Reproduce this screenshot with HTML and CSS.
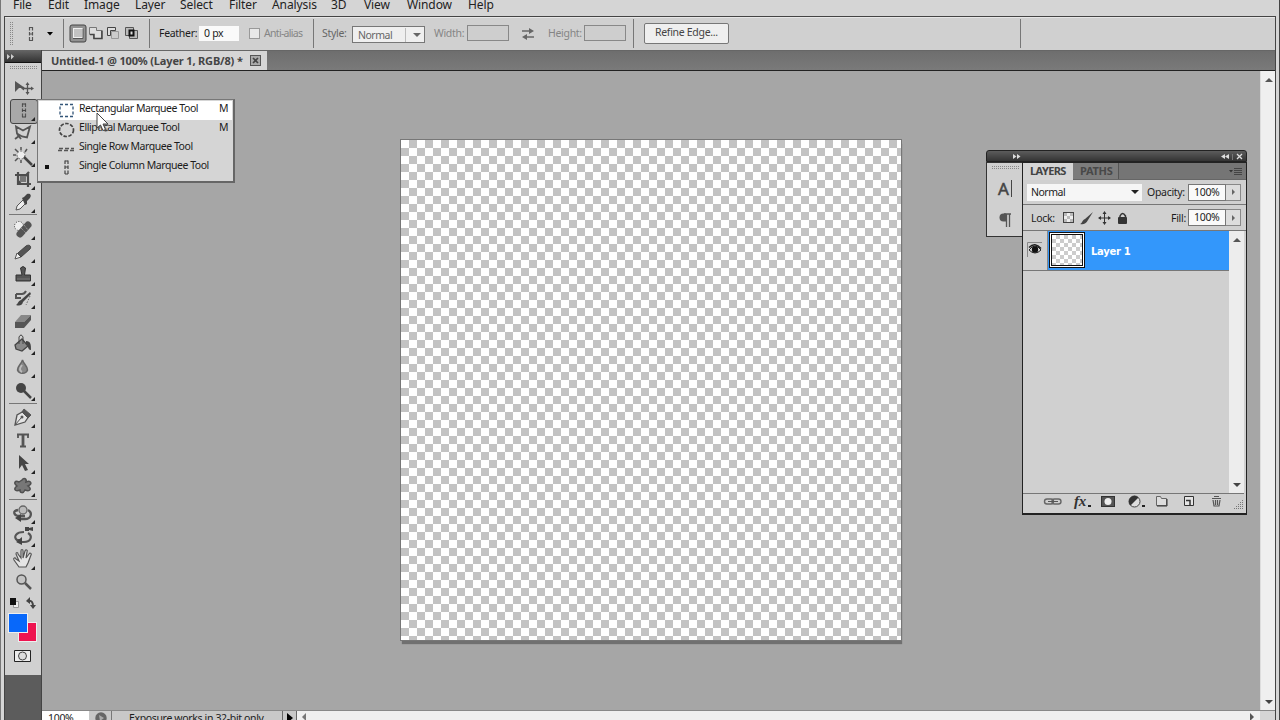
FILE: index.html
```html
<!DOCTYPE html>
<html lang="en">
<head>
<meta charset="utf-8">
<title>Untitled-1</title>
<link rel="stylesheet" href="styles.css">
</head>
<body>
<div class="app">
  <nav class="menubar">
    <span class="m-file">File</span><span class="m-edit">Edit</span><span class="m-image">Image</span><span class="m-layer">Layer</span><span class="m-select">Select</span><span class="m-filter">Filter</span><span class="m-analysis">Analysis</span><span class="m-3d">3D</span><span class="m-view">View</span><span class="m-window">Window</span><span class="m-help">Help</span>
  </nav>
  <div class="frame">
    <div class="options">
      <div class="opt-preset">
        <i class="grip-v"></i>
        <svg width="50" height="30" viewBox="0 0 50 30"><path d="M19.500 8v14M22.500 8v14" stroke="#555" stroke-width="1.200" stroke-dasharray="3.500 1.500"/><path d="M19 8.500h4M19 21.500h4M19 15h4" stroke="#555"/><path d="M37 13h6l-3 3.500z" fill="#000"/></svg>
      </div>
      <div class="opt-modes">
        <svg width="74" height="20" viewBox="0 0 74 20">
          <rect x="1" y="1" width="16" height="17" rx="2" fill="#929292" stroke="#444"/><rect x="4.500" y="4.500" width="9" height="9" fill="#c2c2c2" stroke="#eee"/><path d="M4 14.500h10v-10" fill="none" stroke="#555"/>
          <path d="M20.500 3.500h7v3h5v8h-8v-4h-4z" fill="#ddd" stroke="#777"/><path d="M21 10.500h4v4h8v-8" fill="none" stroke="#444" stroke-width="1.500"/>
          <path d="M38.500 3.500h8v3h-5v5h-3z" fill="#ddd" stroke="#444"/><path d="M42.500 7.500h7v7h-7z" fill="#ccc" stroke="#999"/>
          <path d="M56.500 3.500h8v8h-8zM60.500 6.500h8v8h-8z" fill="#bbb" stroke="#555"/><path d="M60.500 6.500h4v5h-4z" fill="#ddd" stroke="#111" stroke-width="2"/>
        </svg>
      </div>
      <div class="opt-feather"><span class="lbl feather">Feather:</span><span class="field">0 px</span><i class="check"></i><span class="lbl dim anti">Anti-alias</span></div>
      <div class="opt-style"><span class="lbl dim2 style">Style:</span><span class="select"><span class="selval">Normal</span><i class="tri"></i></span><span class="lbl dim width">Width:</span><i class="disabled"></i>
        <svg class="swap" width="14" height="14" viewBox="0 0 14 14"><path d="M1 4h9M4 10h9" stroke="#666" stroke-width="1.500"/><path d="M8 1l5 3-5 3zM6 7l-5 3 5 3z" fill="#666"/></svg>
        <span class="lbl dim height">Height:</span><i class="disabled"></i></div>
      <div class="opt-refine"><span class="button">Refine Edge...</span></div>
    </div>
    <div class="workspace">
      <aside class="tools">
        <div class="tools-head"><svg width="12" height="8" viewBox="0 0 12 8"><path d="M2 1l3 2.500-3 3zM6 1l3 2.500-3 3z" fill="#ccc"/></svg></div>
        <i class="grip-h"></i>
        <div class="group first">
          <div class="tool"><svg viewBox="0 0 28 23"><path d="M5 5v11l4-4h6z" fill="#555"/><path d="M17.500 8v9M13 12.500h9" stroke="#555" stroke-width="1.300"/><path d="M15.500 9l2-3 2 3zM15.500 16l2 3 2-3zM14 10.500l-3 2 3 2zM21 10.500l3 2-3 2z" fill="#555"/></svg></div>
          <div class="tool active more"><svg viewBox="0 0 28 23"><path d="M12.500 4.500v14M15.500 4.500v14" stroke="#555" stroke-width="1.200" stroke-dasharray="3.500 1.500"/><path d="M12 5h4M12 11.500h4M12 18h4" stroke="#444"/></svg></div>
          <div class="tool more"><svg viewBox="0 0 28 23"><path d="M6 4.500l7 4 7-4-3 11-5-1-5-3zM7 12l4 5M5 17l4-3" fill="none" stroke="#555" stroke-width="1.800"/></svg></div>
          <div class="tool more"><svg viewBox="0 0 28 23"><circle cx="11" cy="10" r="4" fill="#eee" stroke="#666" stroke-dasharray="2 1.500"/><path d="M11 2v3M5 4l3 3M3 10h3M5 16l3-3M17 4l-2 3M11 15v3" stroke="#555" stroke-width="1.500"/><path d="M14 12l8 8" stroke="#444" stroke-width="2.500"/></svg></div>
          <div class="tool more"><svg viewBox="0 0 28 23"><path d="M8 4v12h13M5 7h13v12M9 15l10-11" fill="none" stroke="#4d4d4d" stroke-width="2.200"/><path d="M10 8h6v6h-6z" fill="#777"/></svg></div>
          <div class="tool more"><svg viewBox="0 0 28 23"><path d="M6 19l1-4 7-7 3 3-7 7z" fill="#eee" stroke="#555"/><path d="M12 7l2-1 3-3c3-1 5 1 3 4l-3 3v3l-2 1z" fill="#444"/></svg></div>
        </div>
        <i class="rule tight"></i>
        <div class="group second">
          <div class="tool more"><svg viewBox="0 0 28 23"><circle cx="9" cy="8" r="4.500" fill="#eee" stroke="#333" stroke-dasharray="1 1.500"/><path d="M10 16l8-9" stroke="#555" stroke-width="7" stroke-linecap="round"/><path d="M11 10l5 5M14 7l4 5" stroke="#aaa" stroke-dasharray="1 1"/></svg></div>
          <div class="tool more"><svg viewBox="0 0 28 23"><path d="M5 18l2-6 4 4z" fill="#eee" stroke="#555"/><path d="M8 12l8-7c3-2 6 0 4 3l-9 8z" fill="#555" stroke="#444"/></svg></div>
          <div class="tool more"><svg viewBox="0 0 28 23"><path d="M10.500 4q2.500-3 5 0l-1 7h6v6H6v-6h6z" fill="#555" stroke="#333"/><path d="M7 15h13" stroke="#777"/></svg></div>
          <div class="tool more"><svg viewBox="0 0 28 23"><path d="M6 18c2-1 2-4 5-5L20 5l1 2-8 8c-1 4-4 4-7 3z" fill="#444"/><path d="M6 7h6c2 0 3-1 4-3M6 7v4h5" fill="none" stroke="#555" stroke-width="2"/><path d="M20 9l-4 9" stroke="#666" stroke-dasharray="1.500 1.500"/></svg></div>
          <div class="tool more"><svg viewBox="0 0 28 23"><path d="M5 12l6-7h10l-7 7z" fill="#888"/><path d="M5 12h9v6H5zM14 12l7-7v5l-7 8z" fill="#555"/></svg></div>
          <div class="tool more"><svg viewBox="0 0 28 23"><path d="M5 12l7-6 6 7-6 5-6-2z" fill="#888" stroke="#444" stroke-width="1.300"/><path d="M9 11V4q2-4 4 0v7" fill="none" stroke="#444"/><path d="M16 8c5 0 5 4 5 9-4 0-2-5-5-6z" fill="#444"/></svg></div>
          <div class="tool more"><svg viewBox="0 0 28 23"><path d="M12.500 4c1 4 5 6 5 10a5.300 5 0 0 1-10 0c0-4 4-6 5-10z" fill="#888" stroke="#666" stroke-width="1.500"/><path d="M12 9q-4 5 0 7" fill="none" stroke="#bbb" stroke-width="2"/></svg></div>
          <div class="tool more"><svg viewBox="0 0 28 23"><circle cx="11" cy="9" r="5" fill="#444"/><path d="M14 12l7 7" stroke="#444" stroke-width="2.500"/></svg></div>
        </div>
        <i class="rule"></i>
        <div class="group third">
          <div class="tool more"><svg viewBox="0 0 28 23"><path d="M5 19l2-10 7-4 5 5-4 6z" fill="#e4e4e4" stroke="#555" stroke-width="1.300"/><path d="M5 19l6-7M14 3l7 6-3 3-6-6z" stroke="#555" fill="#555"/><circle cx="12" cy="11" r="1.500" fill="#555"/></svg></div>
          <div class="tool more"><svg viewBox="0 0 28 23"><path d="M7 5.500h12M8 9V5M18 9V5M10 17.500h6" fill="none" stroke="#555" stroke-width="1.800"/><path d="M13 5v13" stroke="#555" stroke-width="2.800"/></svg></div>
          <div class="tool more"><svg viewBox="0 0 28 23"><path d="M9 3v14l3-4 3 6 3-1-3-6h4z" fill="#444"/></svg></div>
          <div class="tool more"><svg viewBox="0 0 28 23"><path d="M12 5c2-3 5-1 4 2 5-2 7 2 2 4 4 3 2 6-3 4-2 4-5 3-5 0-5 2-7-1-3-4-4-3-2-6 2-4z" fill="#777" stroke="#505050" stroke-width="1.500"/></svg></div>
        </div>
        <i class="rule"></i>
        <div class="group fourth">
          <div class="tool more"><svg viewBox="0 0 28 23"><path d="M8 8c-6 1-4 5 0 6h7M18 8c5 3 3 9-3 9H9" fill="none" stroke="#555" stroke-width="2.300"/><circle cx="13" cy="8" r="4" fill="#bbb" stroke="#666" stroke-width="1.300"/><path d="M11 12v8l-6-4z" fill="#444"/></svg></div>
          <div class="tool more"><svg viewBox="0 0 28 23"><path d="M14 7C6 7 3 12 7 15h5M18 8c5 3 3 9-4 9h-4" fill="none" stroke="#555" stroke-width="2.200"/><path d="M15 2h4v1l4-1v4l-4-1v1h-4zM12 12v8l-6-3z" fill="#444"/></svg></div>
          <div class="tool more"><svg viewBox="0 0 28 23"><path d="M9 19l-5-7c-1-2 1-3 2-1l3 2-3-7c0-2 2-2 2 0l3 4V3c0-2 2-2 2 0v7l2-7c1-2 3-1 2 1l-1 6 3-4c1-2 3 0 2 1l-3 8-2 4z" fill="#e5e5e5" stroke="#555" stroke-width="1.200"/></svg></div>
          <div class="tool"><svg viewBox="0 0 28 23"><circle cx="11.500" cy="8.500" r="4.500" fill="#c4c4c4" stroke="#555" stroke-width="1.500"/><path d="M15 12l6 6" stroke="#555" stroke-width="2.500"/></svg></div>
        </div>
        <svg class="swatches" width="36" height="80" viewBox="0 0 36 80"><path d="M8.500 7.500h5v6h-5z" fill="#eee" stroke="#999"/><path d="M5 4h6v7H5z" fill="#111"/><path d="M23 7c4-1 5 2 5 5" fill="none" stroke="#444" stroke-width="2"/><path d="M25 3v7l-4-3zM25 11h6l-3 4z" fill="#444"/><rect x="13.500" y="28.500" width="18" height="19" fill="#ee1450" stroke="#eee"/><rect x="3.500" y="19.500" width="19" height="19" fill="#0868fa" stroke="#eee"/><path d="M9.500 56.500h16v11h-16z" fill="#ececec" stroke="#222"/><circle cx="17.500" cy="62" r="4" fill="#ddd" stroke="#444"/></svg>
      </aside>
      <main class="doc">
        <div class="tabbar"><div class="tab"><span class="tabname">Untitled-1 @ 100% (Layer 1, RGB/8) *</span><svg width="11" height="11" viewBox="0 0 11 11"><rect x=".5" y=".5" width="10" height="10" fill="#aaa" stroke="#555"/><path d="M3 3l5 5M8 3l-5 5" stroke="#444" stroke-width="1.600"/></svg></div></div>
        <div class="view">
          <div class="pasteboard"><div class="canvas"></div></div>
          <div class="vscroll"><i class="up"></i><i class="down"></i></div>
        </div>
        <footer class="status">
          <span class="zoom">100%</span><span class="dial"><svg width="14" height="14" viewBox="0 0 14 14"><circle cx="7" cy="7" r="5.700" fill="#666"/><path d="M5 4l5 3-4 3z" fill="#aaa"/></svg></span><span class="message">Exposure works in 32-bit only</span><span class="next"><i></i></span><span class="hscroll"><i class="left"></i><i class="right"></i></span><span class="corner"></span>
        </footer>
      </main>
    </div>
  </div>

  <div class="flyout">
    <div class="fly hot"><i></i><svg viewBox="0 0 18 18"><rect x="3" y="3.500" width="13" height="12" fill="none" stroke="#357" stroke-width="1.300" stroke-dasharray="3 2"/></svg><span>Rectangular Marquee Tool</span><b>M</b></div>
    <div class="fly"><i></i><svg viewBox="0 0 18 18"><ellipse cx="9.500" cy="10" rx="7" ry="6.500" fill="none" stroke="#444" stroke-width="1.700" stroke-dasharray="3.500 1.500"/></svg><span>Elliptical Marquee Tool</span><b>M</b></div>
    <div class="fly"><i></i><svg viewBox="0 0 18 18"><path d="M1 11.500h16M2 9.500h15" stroke="#555" stroke-width="1.400" stroke-dasharray="4 2"/></svg><span>Single Row Marquee Tool</span></div>
    <div class="fly"><i class="dot"></i><svg viewBox="0 0 18 18"><path d="M8 2.500v14M11 2.500v14" stroke="#444" stroke-width="1.200" stroke-dasharray="3.500 1.500"/><path d="M8 3h3M8 9h3M8 16h3" stroke="#444"/></svg><span>Single Column Marquee Tool</span></div>
  </div>
  <svg class="cursor" width="16" height="21" viewBox="0 0 16 21"><path d="M2 2v16l4-3 3 5 3-1-3-5h5z" fill="#555" opacity=".6"/><path d="M1 1v15l3.500-3 2.500 5.500 2.500-1-2.500-5.500h5z" fill="#fff" stroke="#444"/></svg>

  <section class="dock">
    <header class="dock-head"><svg class="ex" width="10" height="7" viewBox="0 0 10 7"><path d="M1 1l3.500 2.500L1 6zM5 1l3.500 2.500L5 6z" fill="#ddd"/></svg><svg width="24" height="9" viewBox="0 0 24 9"><path d="M5 2v5L1 4.500zM9 2v5L5 4.500z" fill="#ddd"/><path d="M12.500 2v6" stroke="#777"/><path d="M17 2l5 5M22 2l-5 5" stroke="#ddd" stroke-width="1.300"/></svg></header>
    <div class="dock-body">
      <div class="iconstrip"><i class="grip-h"></i><div class="char">A</div><div class="para"><svg width="12" height="14" viewBox="0 0 12 14"><path d="M7 .5H4.500a4 4 0 0 0 0 8H7z" fill="#555"/><path d="M5 1h7M7.500 1v13M10.500 1v13" stroke="#555" stroke-width="1.300"/></svg></div></div>
      <div class="layers">
        <div class="ltabs"><span class="on">LAYERS</span><span class="off">PATHS</span><svg width="14" height="10" viewBox="0 0 14 10"><path d="M0 3h4L2 5.500z" fill="#333"/><path d="M5 1.500h8M5 3.500h8M5 5.500h8M5 7.500h8" stroke="#444"/></svg></div>
        <div class="lrow one"><span class="blend"><span>Normal</span><i class="tri"></i></span><span class="lbl opacity">Opacity:</span><span class="num">100%</span><span class="step"></span></div>
        <div class="lrow two"><span class="lbl lock">Lock:</span>
          <svg width="70" height="16" viewBox="0 0 70 16"><rect x="4.500" y="2.500" width="10" height="10" fill="#eee" stroke="#444"/><path d="M5 3h3v3H5zM11 3h3v3h-3zM8 6h3v3H8zM5 9h3v3H5zM11 9h3v3h-3z" fill="#bbb"/><path d="M21 14c2 0 2-4 5-5l8-7-5 8c-2 4-5 5-8 4z" fill="#444"/><path d="M45.500 3v10M40 8h11" stroke="#333"/><path d="M43.500 4l2-3 2 3zM43.500 12l2 3 2-3zM42 6l-3 2 3 2zM49 6l3 2-3 2z" fill="#333"/><path d="M61 8V6q2.500-5 5.500 0v2" fill="none" stroke="#333" stroke-width="1.500"/><rect x="59" y="7" width="9" height="7" rx="1" fill="#333"/></svg>
          <span class="lbl fill">Fill:</span><span class="num">100%</span><span class="step"></span></div>
        <div class="llist">
          <div class="layer"><div class="eye"><svg width="15" height="15" viewBox="0 0 15 15"><path d="M.5 15V.500H15" fill="none" stroke="#888"/><path d="M2 8q6-8 12 0-6 6-12 0z" fill="#ddd" stroke="#222"/><circle cx="8" cy="7.500" r="3.200" fill="#111"/><path d="M2 5.500q6-6 12 1" fill="none" stroke="#222" stroke-width="1.500"/></svg></div><div class="row-on"><div class="thumb"><i></i></div><span>Layer 1</span></div></div>
          <div class="lscroll"><i class="up"></i><i class="down"></i></div>
        </div>
        <footer class="lfoot"><svg width="204" height="20" viewBox="0 0 204 20">
          <rect x="4.500" y="6" width="9" height="5" rx="2.500" fill="none" stroke="#666" stroke-width="1.400"/><rect x="12" y="6" width="9" height="5" rx="2.500" fill="none" stroke="#666" stroke-width="1.400"/><path d="M8 8.500h10" stroke="#555"/>
          <text x="34" y="13" class="fx">fx</text><path d="M48 12h3v2h-3z" fill="#222"/>
          <rect x="61.500" y="3.500" width="13" height="10" fill="#555" stroke="#333"/><circle cx="68" cy="8.500" r="3.500" fill="#eee"/>
          <circle cx="94.500" cy="8.500" r="5.500" fill="#ddd" stroke="#444"/><path d="M90.500 12.500a5.500 5.500 0 0 1 8-8z" fill="#333"/><path d="M102 12h3v2h-3z" fill="#222"/>
          <path d="M116.500 3.500h4l1 2h5v7h-10z" fill="#ddd" stroke="#666"/><path d="M117 13h10V6" fill="none" stroke="#333"/>
          <path d="M144.500 3.500h9v9h-9z" fill="#e5e5e5" stroke="#333"/><path d="M146 7.500h4v5" fill="none" stroke="#333" stroke-width="1.500"/>
          <path d="M172 5.500h9M174 3.500h5M173 7l1 6h5l1-6M175.500 7v5M177.500 7v5" fill="none" stroke="#555" stroke-width="1.200"/>
          <path d="M194 15.500h9M196 13.500h7M198 11.500h5M200 9.500h3M202 7.500h1" stroke="#777" stroke-dasharray="1 1"/></svg></footer>
      </div>
    </div>
  </section>
</div>
</body>
</html>
```
FILE: styles.css
```css
* { box-sizing: border-box; }
body { margin: 0; background: #d4d4d4; }
.app { position: relative; width: 1280px; height: 720px; overflow: hidden; display: flex; flex-direction: column; background: #d5d5d5; border-left: 1px solid #777; border-right: 1px solid #444; font: 10.5px "Noto Sans", sans-serif; letter-spacing: -.3px; color: #1c1c1c; }
i { display: block; flex: none; }
svg { display: block; flex: none; }
span { white-space: nowrap; }

.menubar { height: 16px; flex: none; display: flex; padding-left: 12px; font: 12px/12px "Noto Sans", sans-serif; letter-spacing: -.1px; color: #222; }
.menubar span { flex: none; height: 12px; margin-top: -1px; }
.m-file { width: 35px; } .m-edit { width: 36px; } .m-image { width: 51px; } .m-layer { width: 45px; } .m-select { width: 49px; } .m-filter { width: 43px; }
.m-analysis { width: 59px; } .m-3d { width: 33px; } .m-view { width: 43px; } .m-window { width: 61px; }

.frame { margin: 0 3px 0 3px; height: 704px; border: solid #444; border-width: 1px 1px 0 1px; display: flex; flex-direction: column; }
.options { height: 33px; flex: none; background: #d0d0d0; border-top: 1px solid #e6e6e6; display: flex; padding: 1px 0 2px; }
.options > div { display: flex; align-items: center; flex: none; border-right: 1px solid #777; }
.opt-preset { width: 59px; padding-left: 4px; }
.grip-v { width: 4px; height: 24px; background: conic-gradient(#888 25%, transparent 0) 0 0/2px 2px; }
.opt-preset svg { margin-left: -3px; }
.opt-modes { width: 86px; padding-left: 5px; }
.opt-feather { width: 164px; padding-left: 9px; }
.lbl { display: block; flex: none; }
.options .lbl { padding-bottom: 2px; }
.feather { width: 40px; }
.field { width: 40px; height: 15px; line-height: 14px; background: #fafafa; padding-left: 5px; }
.check { width: 11px; height: 11px; border: 1px solid #999; background: #e8e8e8; margin-left: 10px; }
.anti { margin-left: 4px; letter-spacing: -.7px; }
.dim { color: #858585; } .dim2 { color: #666; }
.opt-style { width: 320px; padding-left: 8px; }
.style { width: 30px; }
.select { width: 73px; height: 17px; margin-top: 2px; border: 1px solid #777; background: #efefef; display: flex; align-items: center; justify-content: space-between; padding: 0 3px 0 5px; color: #666; }
.selval { width: 48px; border-right: 1px solid #bbb; letter-spacing: -.5px; }
.tri { border: solid transparent; border-width: 4px 4px 0; border-top-color: #222; }
.select .tri { border-top-color: #666; }
.width { margin-left: 9px; width: 33px; }
.height { width: 36px; }
.disabled { width: 42px; height: 16px; margin-top: -1px; border: 1px solid #888; background: #cecece; }
.swap { margin: 0 13px 0 12px; }
.opt-refine { width: 387px; padding-left: 10px; }
.button { width: 85px; height: 21px; margin-top: -1px; border: 1px solid #777; border-radius: 2px; background: #efefef; line-height: 17px; padding-left: 10px; color: #444; }

.workspace { flex: 1; min-height: 0; display: flex; }
.tools { width: 37px; flex: none; background: linear-gradient(#d0d0d0, #d0d0d0) 0 0/100% 625px no-repeat #5c5c5c; border-right: 1px solid #444; }
.tools-head { height: 13px; background: linear-gradient(#666, #333); border-bottom: 1px solid #111; padding-top: 3px; }
.grip-h { width: 28px; height: 4px; background: conic-gradient(#888 25%, transparent 0) 0 0/2px 2px; margin: 3px 0 0 4px; }
.group { padding-top: 1px; }
.group.first { padding-top: 6px; }
.group.second { padding-top: 2px; }
.group.fourth { padding-top: 1px; }
.tool { height: 23px; position: relative; padding-left: 5px; }
.tool svg { width: 28px; height: 23px; }
.tool.active::before { content: ""; position: absolute; left: 5px; top: 0; width: 26px; height: 23px; background: #a8a8a8; border: 1px solid #444; border-radius: 3px; }
.tool.active svg { position: relative; }
.more::after { content: ""; position: absolute; left: 26px; bottom: 1px; border: solid transparent; border-width: 0 0 4px 4px; border-bottom-color: #222; }
.rule { height: 1px; background: #777; margin: 1px 4px 1px; }
.rule.tight { margin-top: 0; }

.doc { flex: 1; min-width: 0; display: flex; flex-direction: column; }
.tabbar { height: 21px; flex: none; background: linear-gradient(#6e6e6e, #7a7a7a); border-top: 1px solid #666; border-bottom: 1px solid #222; }
.tab { width: 225px; height: 19px; background: #d6d6d6; display: flex; align-items: center; padding-left: 9px; font: bold 11px "Noto Sans", sans-serif; letter-spacing: -.16px; color: #444; }
.tabname { width: 199px; }
.view { flex: 1; min-height: 0; display: flex; }
.pasteboard { flex: 1; background: #a6a6a6; padding: 69px 0 0 359px; }
.canvas { width: 500px; height: 500px; background: repeating-conic-gradient(#c3c3c3 0 25%, #fff 0 50%) 0 0/16px 16px; box-shadow: 0 0 0 1px #777, 1px 4px 1px #707070; }
.vscroll { width: 15px; background: #efefef; border-left: 1px solid #ddd; display: flex; flex-direction: column; align-items: center; justify-content: space-between; padding: 7px 0 6px 1px; }
.up { border: solid transparent; border-width: 0 4px 4px; border-bottom-color: #555; }
.down { border: solid transparent; border-width: 4px 4px 0; border-top-color: #444; }
.status { height: 10px; flex: none; display: flex; overflow: hidden; border-top: 1px solid #888; background: #c8c8c8; line-height: 14px; }
.status > span { flex: none; height: 14px; }
.zoom { width: 47px; background: #fff; padding-left: 6px; }
.dial { width: 23px; padding-left: 5px; border-right: 1px solid #777; }
.message { width: 171px; padding-left: 17px; border-right: 1px solid #666; letter-spacing: -.35px; }
.next { width: 14px; border-right: 1px solid #666; padding: 2px 0 0 4px; }
.next i { width: 0; border: solid transparent; border-width: 5px 0 5px 6px; border-left-color: #000; }
.hscroll { width: 963px; background: #efefef; display: flex; align-items: flex-start; justify-content: space-between; padding: 2px 6px 0 5px; }
.left { border: solid transparent; border-width: 4px 4px 4px 0; border-right-color: #777; }
.right { border: solid transparent; border-width: 4px 0 4px 4px; border-left-color: #555; }
.corner { width: 15px; background: #d5d5d5; }

.flyout { position: absolute; left: 36px; top: 99px; width: 198px; height: 84px; background: #d5d5d5; border: 1px solid #777; border-right: 2px solid #666; border-bottom: 2px solid #666; padding: 1px; letter-spacing: -.45px; }
.fly { height: 19px; display: flex; }
.fly > i { width: 4px; height: 4px; margin: 7px 12px 0 6px; }
.fly .dot { background: #111; }
.fly svg { width: 18px; height: 18px; margin: 0 4px 0 -4px; }
.fly span { line-height: 15px; width: 140px; }
.fly b { font-weight: normal; line-height: 15px; }
.hot { background: #fff; }
.cursor { position: absolute; left: 95px; top: 112px; }

.dock { position: absolute; left: 985px; top: 150px; width: 261px; height: 366px; }
.dock-head { height: 12px; background: linear-gradient(#5c5c5c, #343434); border: 1px solid #222; border-radius: 3px 3px 0 0; display: flex; justify-content: space-between; padding: 1px 2px 0 25px; }
.ex { margin-top: 1px; }
.dock-body { display: flex; align-items: flex-start; }
.iconstrip { width: 36px; height: 75px; background: #d0d0d0; border: 1px solid #333; border-right: 0; }
.char { font: 17px/17px "Noto Sans", sans-serif; color: #444; width: 14px; margin: 10px 0 0 11px; border-right: 1px solid #444; -webkit-text-stroke: .5px #444; height: 17px; }
.para { margin: 16px 0 0 12px; }
.layers { width: 225px; height: 353px; background: #d0d0d0; border: solid #222; border-width: 1px 1px 2px 1px; }
.ltabs { height: 17px; background: #757575; border-bottom: 1px solid #666; display: flex; align-items: flex-start; font: bold 11px/16px "Noto Sans", sans-serif; }
.on { width: 50px; height: 17px; background: #d5d5d5; padding-left: 7px; color: #444; letter-spacing: -.6px; }
.off { width: 46px; padding-left: 7px; color: #484848; background: #7c7c7c; border-right: 1px solid #555; letter-spacing: -.3px; height: 16px; }
.ltabs svg { margin: 4px 0 0 110px; }
.lrow { display: flex; align-items: center; border-bottom: 1px solid #777; padding-left: 4px; }
.one { height: 25px; } .two { height: 26px; }
.blend { width: 115px; height: 17px; background: #f6f6f6; display: flex; align-items: center; justify-content: space-between; padding: 0 3px 0 4px; letter-spacing: -.5px; }
.opacity { width: 46px; padding-left: 5px; }
.num { width: 38px; height: 17px; line-height: 15px; border: 1px solid #777; background: #fafafa; padding-left: 5px; }
.step { width: 15px; height: 17px; border: 1px solid #888; border-left: 0; background: #ddd; display: flex; align-items: center; justify-content: center; }
.step::before { content: ""; border: solid transparent; border-width: 3px 0 3px 3px; border-left-color: #666; }
.lock { width: 32px; padding-left: 4px; }
.fill { width: 21px; margin-left: 38px; padding-left: 4px; }
.llist { height: 263px; display: flex; justify-content: space-between; border-bottom: 1px solid #777; margin-right: 2px; }
.layer { height: 40px; width: 206px; display: flex; border-bottom: 1px solid #777; }
.eye { width: 25px; padding: 11px 0 0 4px; border-right: 1px solid #888; }
.row-on { flex: 1; background: #3397fb; display: flex; align-items: center; color: #fff; font: bold 10px "DejaVu Sans", sans-serif; letter-spacing: -.3px; }
.row-on span { padding-top: 2px; }
.thumb { width: 36px; height: 36px; border: 1px solid #111; background: #fff; padding: 1px; margin: -1px 6px 0 1px; }
.thumb i { width: 32px; height: 32px; border: 1px solid #111; background: repeating-conic-gradient(#ccc 0 25%, #fff 0 50%) 0 0/8px 8px; }
.lscroll { width: 15px; background: #ededed; display: flex; flex-direction: column; align-items: center; justify-content: space-between; padding: 7px 0 6px; }
.lfoot { height: 19px; padding-left: 17px; }
.lfoot svg { margin-top: -1px; }
.fx { font: italic bold 15px "Liberation Serif", serif; fill: #333; }
```
